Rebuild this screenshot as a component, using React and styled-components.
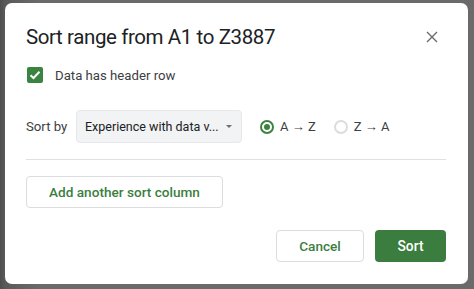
import React from "react";
import styled, { createGlobalStyle } from "styled-components";

const Global = createGlobalStyle`
  html, body { margin: 0; padding: 0; }
  body {
    width: 474px;
    height: 289px;
    overflow: hidden;
    background: #676767;
    font-family: Roboto, "Liberation Sans", Arial, sans-serif;
  }
`;

const Backdrop = styled.div`
  width: 474px;
  height: 289px;
  padding: 3px 6px 5px 5px;
  box-sizing: border-box;
  background: linear-gradient(90deg, #4e4e4e 0, #5a5a5a 5px, #6a6a6a 40px, #6a6a6a 100%);
`;

const Dialog = styled.div`
  width: 463px;
  height: 281px;
  box-sizing: border-box;
  background: #fff;
  border-radius: 7px;
  padding: 19px 22px 0 21px;
  display: flex;
  flex-direction: column;
  color: #202124;
`;

const Header = styled.div`
  display: flex;
  align-items: center;
  justify-content: space-between;
  height: 30px;
`;

const Title = styled.h1`
  margin: 0;
  font-family: Roboto, "Open Sans", sans-serif;
  font-weight: 400;
  font-size: 20.5px;
  letter-spacing: -0.4px;
  color: #202124;
  white-space: nowrap;
`;

const CloseButton = styled.button`
  border: 0;
  background: none;
  padding: 0;
  width: 24px;
  height: 24px;
  display: flex;
  align-items: center;
  justify-content: center;
  margin-right: 2px;
  color: #5f6368;
`;

const CheckRow = styled.label`
  display: flex;
  align-items: center;
  gap: 12px;
  margin-top: 15px;
  margin-left: 1px;
  font-size: 13.2px;
  color: #3c4043;
`;

const CheckBox = styled.span`
  width: 16px;
  height: 16px;
  border-radius: 2px;
  background: #3b8341;
  display: flex;
  align-items: center;
  justify-content: center;
`;

const SortRow = styled.div`
  display: flex;
  align-items: center;
  margin-top: 27px;
`;

const Label = styled.span`
  font-size: 13.2px;
  color: #3c4043;
  width: 50px;
  white-space: nowrap;
`;

const Select = styled.div`
  width: 166px;
  height: 33px;
  box-sizing: border-box;
  background: #f1f3f4;
  border: 1px solid #e6e8eb;
  border-radius: 4px;
  display: flex;
  align-items: center;
  justify-content: space-between;
  padding: 0 9px 0 8px;
  font-size: 12.5px;
  color: #202124;
  white-space: nowrap;
`;

const Caret = styled.span`
  width: 0;
  height: 0;
  border-left: 3.5px solid transparent;
  border-right: 3.5px solid transparent;
  border-top: 3.5px solid #6b6e72;
`;

const Radios = styled.div`
  display: flex;
  align-items: center;
  gap: 18px;
  margin-left: 18px;
`;

const RadioItem = styled.label`
  display: flex;
  align-items: center;
  gap: 6px;
  font-size: 13px;
  color: #3c4043;
  white-space: nowrap;
`;

const RadioCircle = styled.span`
  width: 14px;
  height: 14px;
  box-sizing: border-box;
  border-radius: 50%;
  border: 2px solid ${(p) => (p.$checked ? "#3b8341" : "#dadce0")};
  display: flex;
  align-items: center;
  justify-content: center;
  &::after {
    content: "";
    width: 6px;
    height: 6px;
    border-radius: 50%;
    background: ${(p) => (p.$checked ? "#3b8341" : "transparent")};
  }
`;

const Divider = styled.hr`
  border: 0;
  border-top: 1px solid #e0e0e0;
  margin: 16px 0 0 0;
  width: 420px;
`;

const OutlineButton = styled.button`
  height: 32px;
  box-sizing: border-box;
  background: #fff;
  border: 1px solid #dadce0;
  border-radius: 4px;
  font-family: Roboto, sans-serif;
  font-weight: 500;
  font-size: 13.6px;
  color: #3b7e3f;
  padding: 0;
  white-space: nowrap;
`;

const AddButton = styled(OutlineButton)`
  align-self: flex-start;
  margin-top: 16px;
  width: 197px;
`;

const Footer = styled.div`
  display: flex;
  justify-content: flex-end;
  gap: 11px;
  margin-top: 22px;
`;

const CancelButton = styled(OutlineButton)`
  width: 88px;
`;

const PrimaryButton = styled.button`
  width: 71px;
  height: 32px;
  border: 0;
  border-radius: 4px;
  background: #3a7d3e;
  color: #fff;
  font-family: Roboto, sans-serif;
  font-weight: 500;
  font-size: 13.8px;
`;

export default function App() {
  return (
    <>
      <Global />
      <Backdrop>
        <Dialog>
          <Header>
            <Title>Sort range from A1 to Z3887</Title>
            <CloseButton aria-label="Close">
              <svg width="12" height="12" viewBox="0 0 12 12">
                <path d="M1 1L11 11M11 1L1 11" stroke="#6b6b6b" strokeWidth="1.4" />
              </svg>
            </CloseButton>
          </Header>
          <CheckRow>
            <CheckBox>
              <svg width="12" height="10" viewBox="0 0 12 10">
                <path d="M1.5 5.2L4.5 8L10.5 1.8" stroke="#fff" strokeWidth="2" fill="none" />
              </svg>
            </CheckBox>
            Data has header row
          </CheckRow>
          <SortRow>
            <Label>Sort by</Label>
            <Select>
              <span>Experience with data v...</span>
              <Caret />
            </Select>
            <Radios>
              <RadioItem>
                <RadioCircle $checked />
                A → Z
              </RadioItem>
              <RadioItem>
                <RadioCircle />
                Z → A
              </RadioItem>
            </Radios>
          </SortRow>
          <Divider />
          <AddButton>Add another sort column</AddButton>
          <Footer>
            <CancelButton>Cancel</CancelButton>
            <PrimaryButton>Sort</PrimaryButton>
          </Footer>
        </Dialog>
      </Backdrop>
    </>
  );
}
